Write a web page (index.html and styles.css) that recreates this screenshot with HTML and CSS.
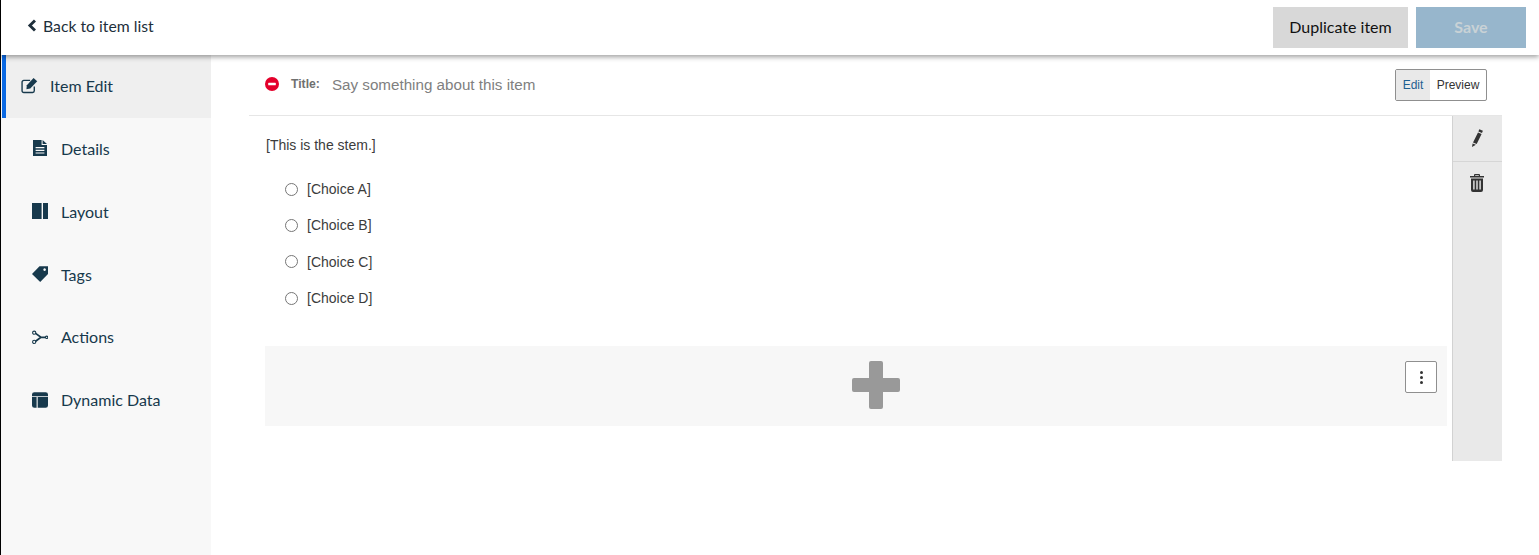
FILE: index.html
```html
<!DOCTYPE html>
<html lang="en">
<head>
<meta charset="utf-8">
<title>Item Edit</title>
<link rel="stylesheet" href="styles.css">
</head>
<body>
<div class="app">
  <header class="topbar">
    <a class="back"><svg class="back-icon" viewBox="0 0 10 14"><path d="M8.2 1.5 2.7 7l5.5 5.5" fill="none" stroke="#1e2f3b" stroke-width="3.1"/></svg>Back to item list</a>
    <div class="top-actions">
      <button class="btn btn-dup">Duplicate item</button>
      <button class="btn btn-save">Save</button>
    </div>
  </header>
  <div class="body">
    <nav class="sidebar">
      <a class="nav-item active">
        <svg class="nav-icon" viewBox="0 0 16 16"><path d="M12.5 9v4a1.6 1.6 0 0 1-1.6 1.6H2.6A1.6 1.6 0 0 1 1 13V4.8a1.6 1.6 0 0 1 1.6-1.6h6" fill="none" stroke="#17394c" stroke-width="1.3"/><path d="M5.5 7.8 11.8.9l3.5 3.2-6.6 6.8-3.6.6z" fill="#17394c"/></svg>
        Item Edit
      </a>
      <a class="nav-item">
        <svg class="nav-icon" viewBox="0 0 16 16"><path fill-rule="evenodd" d="M1 0h8.6v5h5.4v11H1zM10.6 0 15 4h-4.4zM3.6 7v1.2h8.8V7zm0 2.7v1.2h8.8V9.7zm0 2.7v1.2h8.8v-1.2z" fill="#17394c"/></svg>
        Details
      </a>
      <a class="nav-item">
        <svg class="nav-icon" viewBox="0 0 16 16"><path d="M0 0h9.6v16H0zM11 0h5v16h-5z" fill="#17394c"/></svg>
        Layout
      </a>
      <a class="nav-item">
        <svg class="nav-icon" viewBox="0 0 16 16"><path fill-rule="evenodd" d="M7.5.3H16V8l-7.8 8L0 8zM12.6 2.3a1.3 1.3 0 1 0 .01 0z" fill="#17394c"/></svg>
        Tags
      </a>
      <a class="nav-item">
        <svg class="nav-icon" viewBox="0 0 16 16"><g fill="none" stroke="#17394c"><circle cx="2.2" cy="3.7" r="1.6" stroke-width="1.1"/><circle cx="2.2" cy="12.9" r="1.6" stroke-width="1.1"/><circle cx="14.6" cy="8.3" r="1.2" stroke-width="1.1"/><path d="M3.6 4.4 9 8.3l-5.4 3.9M9 8.3h4.4" stroke-width="1.7"/></g></svg>
        Actions
      </a>
      <a class="nav-item">
        <svg class="nav-icon" viewBox="0 0 16 16"><path fill-rule="evenodd" d="M2.4 .2h11.2A2.4 2.4 0 0 1 16 2.6v1.6H0V2.600A2.4 2.4 0 0 1 2.400.2zM0 5.100h4.600V15.800H2.400A2.400 2.400 0 0 1 0 13.400zM5.700 5.100H16v8.300a2.400 2.400 0 0 1-2.400 2.400H5.700z" fill="#17394c"/></svg>
        Dynamic Data
      </a>
    </nav>
    <main class="main">
      <div class="title-row">
        <svg class="status" viewBox="0 0 14 14"><circle cx="7" cy="7" r="7" fill="#e4002b"/><rect x="3.2" y="5.7" width="7.6" height="2.6" rx=".6" fill="#fff"/></svg>
        <span class="title-label">Title:</span>
        <span class="title-hint">Say something about this item</span>
        <div class="toggle">
          <span class="toggle-opt on">Edit</span>
          <span class="toggle-opt">Preview</span>
        </div>
      </div>
      <div class="editor">
        <section class="question">
          <p class="stem">[This is the stem.]</p>
          <ul class="choices">
            <li class="choice"><span class="radio"></span>[Choice A]</li>
            <li class="choice"><span class="radio"></span>[Choice B]</li>
            <li class="choice"><span class="radio"></span>[Choice C]</li>
            <li class="choice"><span class="radio"></span>[Choice D]</li>
          </ul>
          <div class="add-band">
            <svg class="plus" viewBox="0 0 48 48"><path d="M17 2a2 2 0 0 1 2-2h10a2 2 0 0 1 2 2v15h15a2 2 0 0 1 2 2v10a2 2 0 0 1-2 2H31v15a2 2 0 0 1-2 2H19a2 2 0 0 1-2-2V31H2a2 2 0 0 1-2-2V19a2 2 0 0 1 2-2h15z" fill="#999"/></svg>
            <span class="more"><i></i><i></i><i></i></span>
          </div>
        </section>
        <aside class="tools">
          <div class="tool">
            <svg class="tool-icon" viewBox="0 0 12 18"><path d="M8.300.3 11.900 1.800 11 4 7.400 2.500zM7 3.400 10.600 4.900 5.700 15 2 13.500zM1.600 14.500l3.300 1.300L1 18z" fill="#333"/></svg>
          </div>
          <div class="tool tool-last">
            <svg class="tool-icon trash" viewBox="0 0 14 18"><path fill-rule="evenodd" d="M5 0h4a1 1 0 0 1 1 1v1h4v1.600H0V2h4V1a1 1 0 0 1 1-1zm.200 1.200V2h3.600v-.8zM1 4.600h12V16a2 2 0 0 1-2 2H3a2 2 0 0 1-2-2zm2.200 2v9h1.400v-9zm3.100 0v9h1.400v-9zm3.100 0v9h1.400v-9z" fill="#333"/></svg>
          </div>
        </aside>
      </div>
    </main>
  </div>
</div>
</body>
</html>
```

FILE: styles.css
```css
* { box-sizing: border-box; }
html, body { margin: 0; height: 100%; background: #fff; }
body { overflow: hidden; }
.app { height: 555px; border-left: 1px solid #000; display: flex; flex-direction: column; }

.topbar {
  height: 55px; flex: none; display: flex; align-items: center; justify-content: space-between;
  padding: 0 13px 0 26px; background: #fff; box-shadow: 0 2px 5px rgba(0,0,0,.38);
  position: relative; z-index: 2;
  font-family: Lato, sans-serif;
}
.back { display: flex; align-items: center; font-size: 15.75px; color: #1e2f3b; margin-top: -5px; }
.back-icon { width: 10px; height: 13px; margin-right: 6px; }
.top-actions { display: flex; gap: 8px; }
.btn { height: 41px; border: 0; padding: 0 0 2px; font: 16px Lato, sans-serif; }
.btn-dup { width: 135px; background: #d8d8d8; color: #111; }
.btn-save { width: 110px; background: #97b6cc; color: #c9d2d6; font-weight: 700; }

.body { flex: 1; display: flex; min-height: 0; }
.sidebar { width: 210px; flex: none; background: #f8f8f8; font-family: Lato, sans-serif; }
.nav-item {
  height: 62.85px; display: flex; align-items: center; gap: 13px; padding: 0 0 1.85px 31px;
  font-size: 16px; color: #17394c;
}
.nav-item.active { background: #efefef; border-left: 4px solid #0b69e3; margin-left: 1px; padding-left: 15px; gap: 12px; }
.nav-icon { width: 16px; height: 16px; flex: none; }
.nav-item.active .nav-icon { width: 17px; height: 17px; }

.main { flex: 1; padding: 0 37px 0 38px; font-family: "Liberation Sans", Arial, sans-serif; min-width: 0; }
.title-row {
  height: 61px; display: flex; align-items: center; border-bottom: 1px solid #e6e6e6;
  padding: 0 15px 2px 16px;
}
.status { width: 14px; height: 14px; margin-right: 12px; }
.title-label { font-size: 12.2px; font-weight: 700; color: #707070; margin-right: 12px; }
.title-hint { font-size: 15.2px; color: #808080; }
.toggle {
  margin-left: auto; width: 92px; height: 32px; display: flex; border: 1px solid #8f8f8f; border-radius: 2px;
  font-size: 12px; margin-top: 1px;
}
.toggle-opt { display: flex; align-items: center; justify-content: center; flex: 1; color: #333; }
.toggle-opt.on { flex: none; width: 34px; background: #e9e9e9; color: #1e6091; }

.editor { display: flex; }
.question { flex: 1; padding: 20px 5px 0 16px; min-width: 0; }
.stem { margin: 0 0 17px 1px; font-size: 14px; line-height: 18px; color: #3c3c3c; }
.choices { list-style: none; margin: 0; padding: 0 0 0 20px; }
.choice { height: 36px; display: flex; align-items: center; font-size: 14px; color: #3c3c3c; }
.choice + .choice { margin-top: .4px; }
.radio { width: 13px; height: 13px; border: 1px solid #767676; border-radius: 50%; background: #fff; margin-right: 9px; }
.add-band {
  margin-top: 30px; height: 80px; background: #f7f7f7; display: flex; align-items: center; justify-content: center;
  position: relative;
}
.plus { width: 48px; height: 48px; margin: 0 0 2px 40px; }
.more {
  position: absolute; right: 10px; top: 15px; width: 32px; height: 32px; background: #fff;
  border: 1px solid #8f8f8f; border-radius: 2px; display: flex; flex-direction: column;
  align-items: center; justify-content: center; gap: 2px;
}
.more i { width: 3px; height: 3px; border-radius: 50%; background: #333; }

.tools { width: 50px; flex: none; height: 345px; background: #e9e9e9; border-left: 1px solid #d2d2d2; }
.tool { height: 46px; display: flex; align-items: center; justify-content: center; border-bottom: 1px solid #d6d6d6; padding: 0 2px 2px 0; }
.tool-last { border-bottom: 0; height: 44px; }
.tool-icon { width: 12px; height: 18px; }
.trash { width: 14px; height: 18px; }
```
